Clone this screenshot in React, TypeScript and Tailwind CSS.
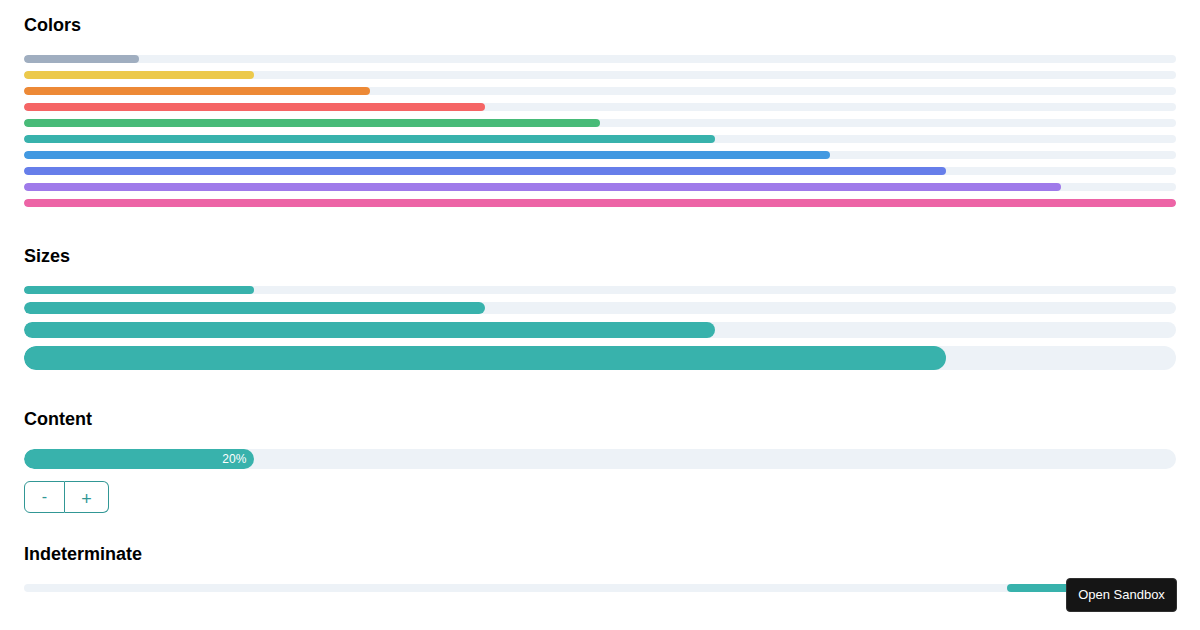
import React from "react";

const colorBars: { value: number; cls: string }[] = [
  { value: 10, cls: "bg-[#A0AEC0]" },
  { value: 20, cls: "bg-[#ECC94B]" },
  { value: 30, cls: "bg-[#ED8936]" },
  { value: 40, cls: "bg-[#F56565]" },
  { value: 50, cls: "bg-[#48BB78]" },
  { value: 60, cls: "bg-[#38B2AC]" },
  { value: 70, cls: "bg-[#4299E1]" },
  { value: 80, cls: "bg-[#667EEA]" },
  { value: 90, cls: "bg-[#9F7AEA]" },
  { value: 100, cls: "bg-[#ED64A6]" },
];

const sizeBars: { value: number; h: string }[] = [
  { value: 20, h: "h-[8px]" },
  { value: 40, h: "h-[12px]" },
  { value: 60, h: "h-[16px]" },
  { value: 80, h: "h-[24px]" },
];

function Bar({ value, fill, h }: { value: number; fill: string; h: string }) {
  return (
    <div className={`w-full ${h} rounded-full bg-[#EDF2F7] overflow-hidden`}>
      <div className={`h-full rounded-full ${fill}`} style={{ width: `${value}%` }} />
    </div>
  );
}

function Heading({ children, className = "" }: { children: React.ReactNode; className?: string }) {
  return <h2 className={`text-[18px] leading-[18px] font-bold text-black ${className}`}>{children}</h2>;
}

export default function App() {
  return (
    <div className="w-[1200px] h-[630px] bg-white px-6 pt-4 font-['Liberation_Sans',Arial,sans-serif] relative overflow-hidden">
      <Heading>Colors</Heading>
      <div className="mt-[21px] flex flex-col gap-2">
        {colorBars.map((b) => (
          <Bar key={b.value} value={b.value} fill={b.cls} h="h-[8px]" />
        ))}
      </div>

      <Heading className="mt-10">Sizes</Heading>
      <div className="mt-[21px] flex flex-col gap-2">
        {sizeBars.map((b) => (
          <Bar key={b.value} value={b.value} fill="bg-[#38B2AC]" h={b.h} />
        ))}
      </div>

      <Heading className="mt-10">Content</Heading>
      <div className="mt-[21px] w-full h-[20px] rounded-full bg-[#EDF2F7] overflow-hidden">
        <div className="h-full rounded-full bg-[#38B2AC] flex items-center justify-end pr-2" style={{ width: "20%" }}>
          <span className="text-white text-[12px] leading-none">20%</span>
        </div>
      </div>
      <div className="mt-3 flex">
        <button className="w-[41px] h-8 border border-[#319795] rounded-l-md text-[#319795] text-[16px] leading-none flex items-center justify-center">
          -
        </button>
        <button className="w-[44px] h-8 border border-l-0 border-[#319795] rounded-r-md text-[#319795] text-[18px] leading-none flex items-center justify-center pt-[3px]">
          +
        </button>
      </div>

      <Heading className="mt-8">Indeterminate</Heading>
      <div className="mt-[21px] w-full h-[8px] rounded-full bg-[#EDF2F7] overflow-hidden flex">
        <div className="ml-[983px] h-full w-[170px] rounded-full bg-[#38B2AC]" />
      </div>

      <div className="absolute left-[1066px] top-[578px] w-[111px] h-[34px] rounded-[4px] bg-[#151515] border border-[#2f2f2f] flex items-center justify-center text-white text-[13px]">
        Open Sandbox
      </div>
    </div>
  );
}
